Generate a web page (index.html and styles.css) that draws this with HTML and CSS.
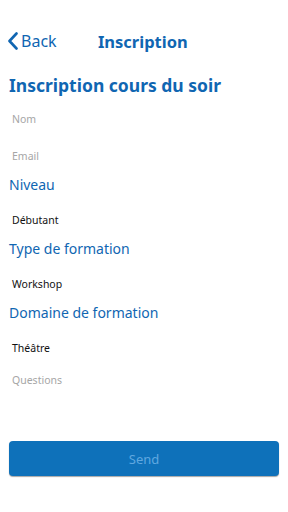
FILE: index.html
```html
<!DOCTYPE html>
<html lang="fr">
<head>
  <meta charset="UTF-8">
  <meta name="viewport" content="width=device-width, initial-scale=1.0">
  <link rel="stylesheet" href="styles.css">
  <title>Inscription</title>
</head>
<body>
  <header class="navbar">
    <a class="back" href="#">
      <svg class="chevron" width="12" height="18" viewBox="0 0 12 18">
        <path d="M9.5 1.5 L2.5 9 L9.5 16.5" fill="none" stroke="currentColor" stroke-width="2.6" stroke-linecap="round" stroke-linejoin="round"/>
      </svg>
      <span>Back</span>
    </a>
    <span class="nav-title">Inscription</span>
  </header>

  <main class="form">
    <h1 class="form-title">Inscription cours du soir</h1>
    <div class="entry first">Nom</div>
    <div class="entry second">Email</div>
    <div class="label">Niveau</div>
    <div class="picker">Débutant</div>
    <div class="label">Type de formation</div>
    <div class="picker">Workshop</div>
    <div class="label">Domaine de formation</div>
    <div class="picker">Théâtre</div>
    <div class="entry editor">Questions</div>
    <button class="send">Send</button>
  </main>
</body>
</html>
```

FILE: styles.css
```css
html, body {
  width: 100%;
  height: 100%;
}

body {
  margin: 0;
  background: #ffffff;
  font-family: "Noto Sans", "Open Sans", sans-serif;
  color: #111111;
}

.navbar {
  position: relative;
  display: flex;
  align-items: center;
  height: 20px;
  padding: 31px 9px 0 7px;
}

.back {
  display: flex;
  align-items: center;
  column-gap: 2px;
  color: #1066b2;
  text-decoration: none;
  font-size: 16px;
}

.chevron {
  display: block;
}

.nav-title {
  flex-grow: 1;
  text-align: center;
  margin-right: 50px;
  font-size: 16.5px;
  font-weight: bold;
  color: #1066b2;
}

.form {
  display: flex;
  flex-direction: column;
  padding: 0 9px;
}

.form-title {
  margin: 24px 0 0;
  height: 20px;
  line-height: 20px;
  font-size: 17.5px;
  font-weight: bold;
  color: #1066b2;
}

.entry, .picker, .label {
  height: 20px;
  line-height: 20px;
}

.entry {
  padding-left: 3px;
  font-size: 10.5px;
  color: #a6a6a6;
  margin-top: 15px;
}

.entry.first {
  margin-top: 14px;
}

.entry.second {
  margin-top: 17px;
}

.entry.editor {
  margin-top: 12px;
}

.label {
  margin-top: 9px;
  font-size: 14px;
  color: #1066b2;
}

.picker {
  margin-top: 15px;
  padding-left: 3px;
  font-size: 10.5px;
  color: #111111;
}

.send {
  margin-top: 51px;
  height: 35px;
  border: none;
  border-radius: 4px;
  background: #0e71ba;
  box-shadow: 0 1px 1px rgba(0, 0, 0, 0.35);
  color: #5fa8e0;
  font-family: inherit;
  font-size: 13px;
}
```
